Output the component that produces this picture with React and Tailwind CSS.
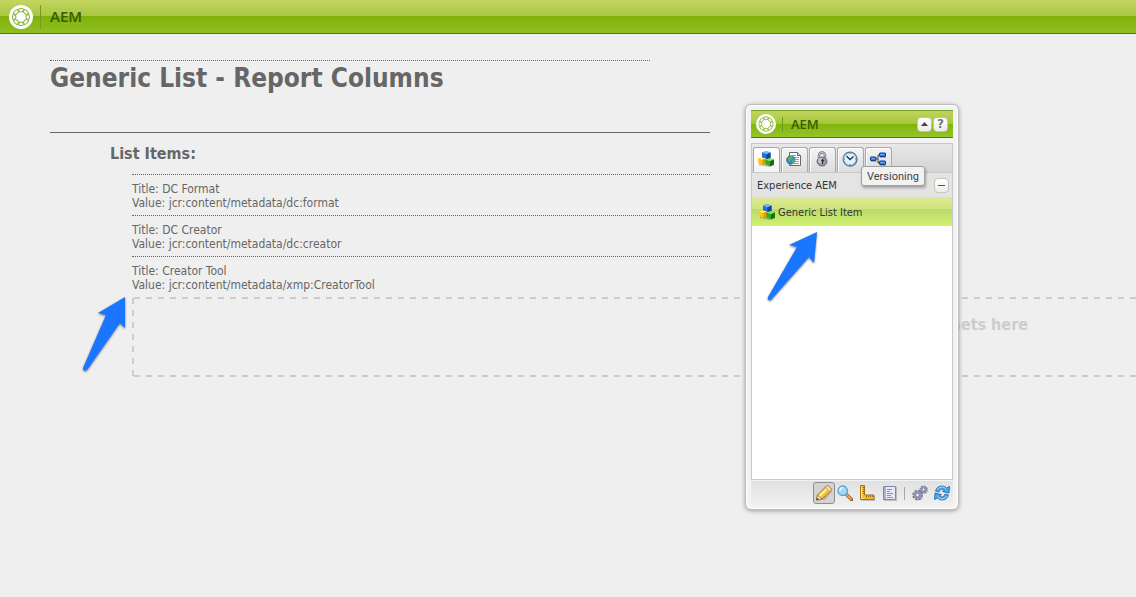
import React from "react";

const ITEMS = [
  { title: "DC Format", value: "jcr:content/metadata/dc:format" },
  { title: "DC Creator", value: "jcr:content/metadata/dc:creator" },
  { title: "Creator Tool", value: "jcr:content/metadata/xmp:CreatorTool" },
];

const LOOPS = [0, 45, 90, 135, 180, 225, 270, 315];

function Logo({ className }) {
  return (
    <svg viewBox="0 0 24 24" className={className} aria-hidden="true">
      <circle cx="12" cy="12" r="12" fill="#fff" />
      <g fill="none" stroke="#86b22a" strokeWidth="1">
        {LOOPS.map((a) => (
          <ellipse key={a} cx="12" cy="5.2" rx="3.3" ry="1.7" transform={`rotate(${a} 12 12)`} />
        ))}
      </g>
    </svg>
  );
}

function Icon({ children }) {
  return (
    <svg viewBox="0 0 16 16" className="size-4 shrink-0" aria-hidden="true">
      {children}
    </svg>
  );
}

function CubesIcon() {
  return (
    <Icon>
      <path d="M1 10l4-1.500L16 11v3.500l-5 1.500L1 14z" fill="#444" opacity=".35" />
      <path d="M4 1.500q4-2 8.500 0v5.500L8.500 8.500 4 7z" fill="#1f6fdc" />
      <path d="M4 1.500q4-2 8.500 0L8.500 3.400z" fill="#6eb4ff" />
      <path d="M8.500 3.400l4-1.900v5.500L8.500 8.500z" fill="#0c439f" />
      <path d="M0 7.500L3.800 6.500 8 7.500v5L4.500 14 .5 12.600z" fill="#ffc20e" />
      <path d="M0 7.500L3.800 6.500 8 7.500 4.500 9z" fill="#ffec7c" />
      <path d="M4.500 9L8 7.500v5L4.500 14z" fill="#e09a00" />
      <path d="M7.500 8.600l4-1.400 4.500 1.400v4.900L12 15.200 7.500 13.600z" fill="#35ab22" />
      <path d="M7.500 8.600l4-1.400 4.500 1.400-4 1.600z" fill="#8be36a" />
      <path d="M12 10.200l4-1.600v4.900l-4 1.700z" fill="#16700f" />
    </Icon>
  );
}

function PageIcon() {
  return (
    <Icon>
      <path d="M3.5 1.5h8l3 3v10h-11z" fill="#fff" stroke="#5c6c80" />
      <path d="M11.5 1.5v3h3" fill="#cbd6e6" stroke="#5c6c80" />
      <path d="M6 4.5h4M8 6.5h5M9 8.5h4M9 10.5h4M8 12.5h5" stroke="#8ea3bf" />
      <circle cx="4.800" cy="9" r="4.200" fill="#3486d0" stroke="#2b628f" strokeWidth=".7" />
      <path d="M2 7l3-2 2 1-1 2-2 1v2l-1.500-1zM6.500 9l2-1v2L7 12.500l-1-1z" fill="#64b93a" />
    </Icon>
  );
}

function LockIcon() {
  return (
    <Icon>
      <path d="M5 7V4.500a3 3 0 0 1 6 0V7" fill="none" stroke="#72727f" strokeWidth="2.400" />
      <path d="M5 7V4.500a3 3 0 0 1 6 0V7" fill="none" stroke="#cfcfd8" strokeWidth="1" />
      <ellipse cx="8" cy="10.500" rx="5" ry="4.500" fill="#9696a4" stroke="#6a6a78" />
      <ellipse cx="6.500" cy="9.500" rx="2.200" ry="2.800" fill="#c5c5d0" />
      <circle cx="8.500" cy="9.500" r="1.200" fill="#222" />
      <path d="M8 10h1v3H8z" fill="#222" />
    </Icon>
  );
}

function ClockIcon() {
  return (
    <Icon>
      <circle cx="8.700" cy="8.800" r="7" fill="#555" opacity=".5" />
      <circle cx="8" cy="8" r="6.900" fill="#b5dcf5" stroke="#5d7a92" strokeWidth="1.200" />
      <circle cx="8" cy="8" r="5.300" fill="#dff3ff" />
      <path d="M4.500 5L8 8.500 11.500 5.500" fill="none" stroke="#26323e" strokeWidth="1.300" />
      <path d="M8 2v1M8 13v1M2 8h1M13 8h1" stroke="#5182a5" />
    </Icon>
  );
}

function VersionIcon() {
  return (
    <Icon>
      <path d="M5 8h3M9.500 4H8v8h1.500" fill="none" stroke="#444" />
      <path d="M1 10h6v1H1zM10 6h6v1h-6zM10 14h6v1h-6z" fill="#444" opacity=".4" />
      <g fill="#2f80ee" stroke="#173d91">
        <rect x="0.500" y="6" width="5.500" height="3.500" rx=".5" />
        <rect x="9.500" y="2" width="6" height="3.500" rx=".5" />
        <rect x="9.500" y="10" width="6" height="3.500" rx=".5" />
      </g>
      <path d="M1.500 7.500h3M10.500 3.500h3M10.500 11.500h3" stroke="#71b5ff" />
    </Icon>
  );
}

function PencilIcon() {
  return (
    <Icon>
      <path d="M2 15.500l9-5 4-5 1 1-7 8z" fill="#777" opacity=".45" />
      <path d="M0.500 15l1-5L10.500 1q1-1 2 0L15 3.500q1 1 0 2L6 14z" fill="#ffc02d" stroke="#a06a10" strokeWidth=".9" />
      <path d="M2.500 10.500L10.300 2.700l1.500 1.500L4 12z" fill="#fff0a0" />
      <path d="M9.300 2.500l4.200 4.200 1.500-1.500q.8-.8 0-1.600L12.400 1q-.8-.8-1.600 0z" fill="#f8d8b0" stroke="#a87838" strokeWidth=".6" />
      <path d="M0.500 15l1-5L6 14z" fill="#f8dfb5" stroke="#8b6420" strokeWidth=".6" />
      <path d="M0.500 15l.5-2.200 1.800 1.600z" fill="#333" />
    </Icon>
  );
}

function SearchIcon() {
  return (
    <Icon>
      <path d="M9.500 9.500l5 5" stroke="#8a5725" strokeWidth="3.200" strokeLinecap="round" />
      <path d="M10 10l4 4" stroke="#f3a545" strokeWidth="2" strokeLinecap="round" />
      <circle cx="5.700" cy="5.700" r="4.700" fill="#a0d8fa" stroke="#5a9fd0" strokeWidth="1.300" />
      <path d="M3 6q0-3 3-3.400" fill="none" stroke="#effaff" strokeWidth="1.500" />
    </Icon>
  );
}

function RulerIcon() {
  return (
    <Icon>
      <path d="M2 2h4v9h10v5H2z" fill="#777" opacity=".4" />
      <path d="M1.500.500h4v9.500h9.500v4.500H1.500z" fill="#f5bd32" stroke="#a8731a" />
      <path d="M3.500 2.500h2M4 4.500h1.500M3.500 6.500h2M4 8.500h1.500M7.500 10.500v2M9.500 10.500v1.500M11.500 10.500v2M13.500 10.500v1.500" stroke="#7b5412" strokeWidth=".8" />
      <path d="M2.500 1.500v12h2" fill="none" stroke="#ffe68f" />
    </Icon>
  );
}

function FormIcon() {
  return (
    <Icon>
      <path d="M3 2h13v14H3z" fill="#777" opacity=".4" />
      <path d="M2.500 1.500h12v13h-12z" fill="#e8e9f6" stroke="#8585a4" />
      <path d="M3 2h2v12H3z" fill="#b0b0cc" />
      <path d="M6 4.500h5M6 6.500h3M6 8.500h6M6 10.500h4M6 12.500h6" stroke="#9090b4" />
    </Icon>
  );
}

function GearsIcon() {
  return (
    <Icon>
      <circle cx="6.500" cy="11" r="4.600" fill="#777" opacity=".4" />
      <circle cx="12.300" cy="5.500" r="3.200" fill="#777" opacity=".4" />
      <circle cx="5.500" cy="10" r="4.300" fill="none" stroke="#70708e" strokeWidth="2" strokeDasharray="1.900 1.470" />
      <circle cx="5.500" cy="10" r="2.700" fill="#f2f2f8" stroke="#9292b4" strokeWidth="3" />
      <circle cx="11.500" cy="4.500" r="3.200" fill="none" stroke="#70708e" strokeWidth="1.700" strokeDasharray="1.500 1.010" />
      <circle cx="11.500" cy="4.500" r="2" fill="#f2f2f8" stroke="#9292b4" strokeWidth="2.200" />
    </Icon>
  );
}

function RefreshIcon() {
  return (
    <Icon>
      <g stroke="#1b5fa8" strokeWidth=".8" strokeLinejoin="round" fill="#4aa9ee">
        <path d="M1.500 6Q3 1 8 1q3 0 4.500 2L15.500 1.500 15 8 8.500 6.500l2-1.500Q8 3 6 5q-.7.500-1 2z" />
        <path d="M14.500 10q-1.500 5-6.500 5-3 0-4.500-2L.5 14.500 1 8l6.500 1.500-2 1.500Q8 13 10 11q.7-.5 1-2z" />
      </g>
      <path d="M3 5q1.500-3 5-3 2.500 0 4 2.300M13 11q-1.500 3-5 3-2.500 0-4-2.300" fill="none" stroke="#a7dcff" strokeWidth=".9" />
    </Icon>
  );
}

const TABS = [
  { label: "Components", icon: <CubesIcon /> },
  { label: "Page", icon: <PageIcon /> },
  { label: "Lock", icon: <LockIcon /> },
  { label: "Workflow", icon: <ClockIcon /> },
  { label: "Versioning", icon: <VersionIcon /> },
];

const TOOLS = [
  { label: "Preview", icon: <SearchIcon /> },
  { label: "Design", icon: <RulerIcon /> },
  { label: "Scaffolding", icon: <FormIcon /> },
];

function Sidekick() {
  const smallButton = "flex size-[15px] items-center justify-center rounded-sm border border-[#c3c7b8] bg-gradient-to-b from-white to-[#ececec]";
  return (
    <aside className="absolute left-[745px] top-[104px] flex h-[406px] w-[214px] flex-col rounded-md border border-[#bdbdbd] bg-[#f3f3f3] px-[5px] pb-1 pt-[5px] shadow-[0_1px_4px_0_rgba(0,0,0,0.35),inset_0_0_0_1px_#fff]">
      <header className="flex h-7 shrink-0 items-center border-b border-t border-b-[#4f7f00] border-t-[#72a52c] bg-[linear-gradient(#bfd55c,#a6c63c_50%,#82b40d_50%,#94c42a)] px-[5px]">
        <Logo className="size-5" />
        <span className="ml-[6px] h-[15px] w-px bg-[#6f9c1a]" />
        <h2 className="ml-2 flex-1 font-['Open_Sans',sans-serif] text-[13px] font-semibold leading-5 text-[#365d00]">AEM</h2>
        <div className="flex gap-px">
          <button aria-label="Collapse" className={smallButton}>
            <svg viewBox="0 0 7 4" className="h-1 w-[7px]" aria-hidden="true"><path d="M0 4L3.500 0 7 4z" fill="#444" /></svg>
          </button>
          <button className={smallButton + " font-['DejaVu_Sans',sans-serif] text-[12px] font-bold leading-none text-[#777]"}>?</button>
        </div>
      </header>

      <div className="mt-[5px] flex flex-1 flex-col border border-[#c9c9c9] bg-white">
        <nav className="flex h-[29px] items-end gap-px border-b border-[#c9c9c9] bg-gradient-to-b from-[#e8e8e8] to-[#d4d4d4] px-px">
          {TABS.map((tab, i) => (
            <button
              key={tab.label}
              aria-label={tab.label}
              className={
                "flex h-[25px] w-[27px] items-center justify-center rounded-t-[3px] border border-b-0 border-[#a8a8a8] pb-[3px] pr-[2px] " +
                (i === 0 ? "bg-gradient-to-b from-white to-[#f4f4f4]" : "bg-gradient-to-b from-[#f4f4f4] to-[#dcdcdc] shadow-[inset_1px_1px_0_#fff]")
              }
            >
              {tab.icon}
            </button>
          ))}
        </nav>
        <div className="flex h-6 items-center justify-between bg-[#e4e4e4] pl-[5px] pr-[3px]">
          <h3 className="pt-[2px] text-[11px] leading-4 text-[#333]">Experience AEM</h3>
          <button aria-label="Collapse group" className={smallButton}>
            <span className="h-px w-[7px] bg-[#555]" />
          </button>
        </div>
        <button className="flex h-[29px] items-center gap-[3px] bg-[linear-gradient(#dcea94,#cfe37e_40%,#b8da69_41%,#d1f073)] pl-[7px] text-left text-[11px] text-[#333]">
          <CubesIcon />
          <span className="pt-[2px] leading-4">Generic List Item</span>
        </button>
      </div>

      <footer className="mt-px flex h-6 shrink-0 items-center bg-gradient-to-b from-[#e1e1e1] to-[#f0f0f0] pr-[3px]">
        <button aria-label="Edit" className="ml-auto flex size-[22px] items-center justify-center rounded-[3px] border border-[#8e8e8e] bg-[#d3d3d3]">
          <PencilIcon />
        </button>
        <div className="ml-[2px] flex gap-[6px]">
          {TOOLS.map((tool) => (
            <button key={tool.label} aria-label={tool.label}>{tool.icon}</button>
          ))}
        </div>
        <span className="ml-[7px] h-[13px] w-px bg-[#aca899]" />
        <div className="ml-[7px] flex gap-[6px]">
          <button aria-label="Page settings"><GearsIcon /></button>
          <button aria-label="Reload"><RefreshIcon /></button>
        </div>
      </footer>

      <div role="tooltip" className="absolute left-[115px] top-[61px] rounded-[3px] border border-[#a0a0a0] bg-[#f2f2f2] px-[5px] pt-px font-[Roboto,sans-serif] text-[11px] leading-[17px] text-[#444] shadow-[1px_2px_3px_rgba(0,0,0,0.3)]">
        Versioning
      </div>
    </aside>
  );
}

function Arrow({ className, d }) {
  return (
    <svg viewBox="0 0 56 80" className={"absolute h-20 w-14 overflow-visible drop-shadow-[0_1px_1px_rgba(0,0,0,0.5)] " + className} aria-hidden="true">
      <path d={d} fill="#1b76ff" />
    </svg>
  );
}

export default function App() {
  return (
    <div className="relative min-h-screen overflow-hidden bg-[#efefef] font-['DejaVu_Sans_Condensed',Tahoma,'DejaVu_Sans',sans-serif] text-[#666]">
      <header className="flex h-[34px] items-center border-b border-[#4f8000] bg-[linear-gradient(#c2d561,#a9c741_48%,#80b109_48%,#8fc023)] pl-[9px]">
        <Logo className="size-6" />
        <span className="ml-[7px] h-6 w-px bg-[#719e1c]" />
        <span className="ml-[9px] font-['Open_Sans',sans-serif] text-[15px] font-semibold text-[#365d00]">AEM</span>
      </header>

      <main className="pl-[50px] pt-[26px]">
        <h1 className="max-w-[600px] border-t border-dotted border-[#666] text-[26px] font-bold leading-[34px]">Generic List - Report Columns</h1>
        <hr className="mt-[37px] max-w-[660px] border-[#666]" />
        <section className="pl-[60px] pt-[11px]">
          <h2 className="text-[16px] font-bold leading-5">List Items:</h2>
          <div className="pl-[22px] pt-[10px]">
            <ul className="max-w-[578px]">
              {ITEMS.map((item) => (
                <li key={item.title} className="border-t border-dotted border-[#666] pb-[5px] pt-[7px] text-[12px] leading-[14px]">
                  <p>Title: {item.title}</p>
                  <p>Value: {item.value}</p>
                </li>
              ))}
            </ul>
            <div className="h-20 bg-[image:repeating-linear-gradient(90deg,#ccc_0_6px,transparent_6px_12px),repeating-linear-gradient(90deg,#ccc_0_6px,transparent_6px_12px),repeating-linear-gradient(180deg,#ccc_0_6px,transparent_6px_12px)] bg-[length:100%_2px,100%_2px,2px_100%] bg-[position:2px_0,2px_100%,0_1px] bg-no-repeat pr-[108px] pt-[18px] text-right text-[16px] font-bold leading-5 text-[#ccc]">
              Drag components or assets here
            </div>
          </div>
        </section>
      </main>

      <Arrow className="left-[75px] top-[292px]" d="M50 5L23 21l8 2L8 76q0 4 4 2L45 31l5 5z" />
      <Sidekick />
      <Arrow className="left-[765px] top-[225px]" d="M52 7L24 20l8 2L3 72q-1 4 3 3L44 32l5 6z" />
    </div>
  );
}
